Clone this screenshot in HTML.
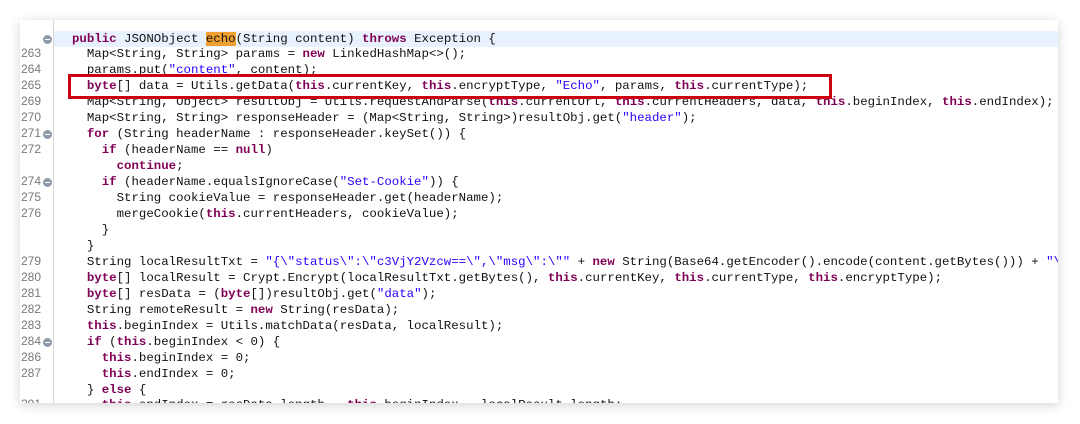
<!DOCTYPE html>
<html><head><meta charset="utf-8"><style>
body{margin:0;width:1080px;height:424px;background:#fff;overflow:hidden;position:relative;font-family:"Liberation Mono",monospace}
.panel{position:absolute;left:20px;top:20px;width:1038px;height:383px;background:#fff;box-shadow:0 2px 10px rgba(0,0,0,.18);overflow:hidden}
.gut{position:absolute;left:33px;top:0;width:1px;height:100%;background:#d8d8d8}
.hl{position:absolute;left:34px;top:11px;right:0;height:16px;background:#e8f2fe}
.ln{position:absolute;left:0;width:21px;text-align:right;font:12px "Liberation Sans",sans-serif;color:#787878}
.f{position:absolute;left:23px;width:9px;height:9px;border-radius:50%;background:#8e9aa8}
.f:after{content:"";position:absolute;left:2px;top:4px;width:5px;height:1px;background:#fff}
.c{position:absolute;left:52px;white-space:pre;font-size:12.4px;color:#111;line-height:16px}
.k{color:#7f0055;font-weight:bold}
.s{color:#2a00ff}
.e{background:#f0a030}
.box{position:absolute;left:48px;top:54px;width:758px;height:19px;border:3px solid #cc0010}
</style></head><body><div class="panel">
<div class="hl"></div><div class="gut"></div>
<div class="f" style="top:15px"></div>
<div class="c" style="top:11px"><span class="k">public</span> JSONObject <span class="e">echo</span>(String content) <span class="k">throws</span> Exception {</div>
<div class="ln" style="top:26px">263</div><div class="c" style="top:26px">  Map&lt;String, String&gt; params = <span class="k">new</span> LinkedHashMap&lt;&gt;();</div>
<div class="ln" style="top:42px">264</div><div class="c" style="top:42px">  params.put(<span class="s">"content"</span>, content);</div>
<div class="ln" style="top:58px">265</div><div class="c" style="top:58px">  <span class="k">byte</span>[] data = Utils.getData(<span class="k">this</span>.currentKey, <span class="k">this</span>.encryptType, <span class="s">"Echo"</span>, params, <span class="k">this</span>.currentType);</div>
<div class="ln" style="top:74px">269</div><div class="c" style="top:74px">  Map&lt;String, Object&gt; resultObj = Utils.requestAndParse(<span class="k">this</span>.currentUrl, <span class="k">this</span>.currentHeaders, data, <span class="k">this</span>.beginIndex, <span class="k">this</span>.endIndex);</div>
<div class="ln" style="top:90px">270</div><div class="c" style="top:90px">  Map&lt;String, String&gt; responseHeader = (Map&lt;String, String&gt;)resultObj.get(<span class="s">"header"</span>);</div>
<div class="ln" style="top:106px">271</div><div class="f" style="top:110px"></div><div class="c" style="top:106px">  <span class="k">for</span> (String headerName : responseHeader.keySet()) {</div>
<div class="ln" style="top:122px">272</div><div class="c" style="top:122px">    <span class="k">if</span> (headerName == <span class="k">null</span>)</div>
<div class="c" style="top:138px">      <span class="k">continue</span>;</div>
<div class="ln" style="top:154px">274</div><div class="f" style="top:158px"></div><div class="c" style="top:154px">    <span class="k">if</span> (headerName.equalsIgnoreCase(<span class="s">"Set-Cookie"</span>)) {</div>
<div class="ln" style="top:170px">275</div><div class="c" style="top:170px">      String cookieValue = responseHeader.get(headerName);</div>
<div class="ln" style="top:186px">276</div><div class="c" style="top:186px">      mergeCookie(<span class="k">this</span>.currentHeaders, cookieValue);</div>
<div class="c" style="top:202px">    }</div>
<div class="c" style="top:218px">  }</div>
<div class="ln" style="top:234px">279</div><div class="c" style="top:234px">  String localResultTxt = <span class="s">"{\"status\":\"c3VjY2Vzcw==\",\"msg\":\""</span> + <span class="k">new</span> String(Base64.getEncoder().encode(content.getBytes())) + <span class="s">"\"}"</span>;</div>
<div class="ln" style="top:250px">280</div><div class="c" style="top:250px">  <span class="k">byte</span>[] localResult = Crypt.Encrypt(localResultTxt.getBytes(), <span class="k">this</span>.currentKey, <span class="k">this</span>.currentType, <span class="k">this</span>.encryptType);</div>
<div class="ln" style="top:266px">281</div><div class="c" style="top:266px">  <span class="k">byte</span>[] resData = (<span class="k">byte</span>[])resultObj.get(<span class="s">"data"</span>);</div>
<div class="ln" style="top:282px">282</div><div class="c" style="top:282px">  String remoteResult = <span class="k">new</span> String(resData);</div>
<div class="ln" style="top:298px">283</div><div class="c" style="top:298px">  <span class="k">this</span>.beginIndex = Utils.matchData(resData, localResult);</div>
<div class="ln" style="top:314px">284</div><div class="f" style="top:318px"></div><div class="c" style="top:314px">  <span class="k">if</span> (<span class="k">this</span>.beginIndex &lt; 0) {</div>
<div class="ln" style="top:330px">286</div><div class="c" style="top:330px">    <span class="k">this</span>.beginIndex = 0;</div>
<div class="ln" style="top:346px">287</div><div class="c" style="top:346px">    <span class="k">this</span>.endIndex = 0;</div>
<div class="c" style="top:362px">  } <span class="k">else</span> {</div>
<div class="ln" style="top:377px">291</div><div class="c" style="top:377px">    <span class="k">this</span>.endIndex = resData.length - <span class="k">this</span>.beginIndex - localResult.length;</div>
<div class="box"></div>
</div></body></html>
